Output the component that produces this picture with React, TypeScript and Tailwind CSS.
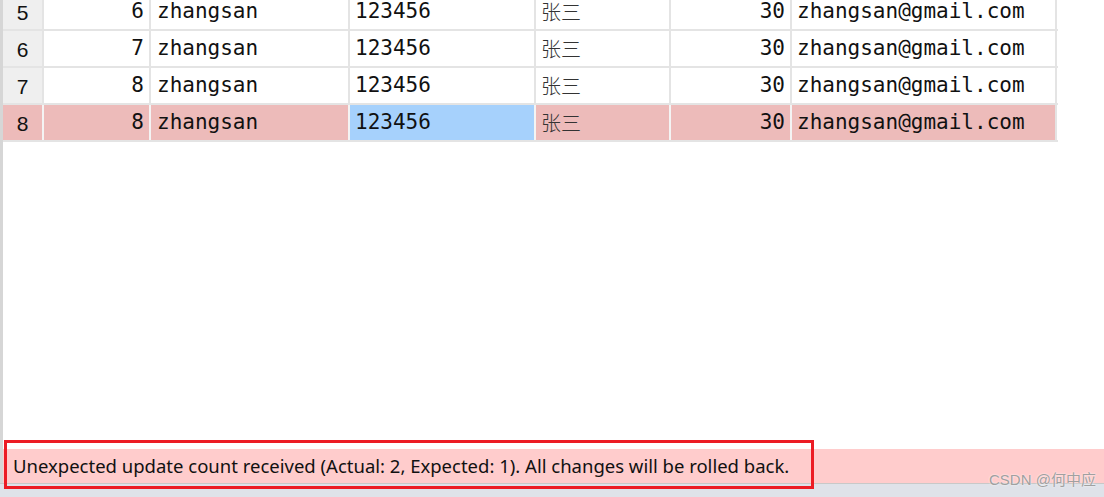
const rows = [
  { no: 5, id: 6 },
  { no: 6, id: 7 },
  { no: 7, id: 8 },
  { no: 8, id: 8, selected: true },
];

const mono = "font-['DejaVu_Sans_Mono',monospace] text-[21px] text-[#111]";

export default function App() {
  return (
    <div className="relative flex h-[497px] w-[1104px] flex-col overflow-hidden bg-white">
      {/* grid area */}
      <div className="flex-1 overflow-hidden border-l-[3px] border-[#d6d6d6]">
        <div className="-mt-[6px] w-[1055px]">
          {rows.map((r) => {
            const line = r.selected ? "border-[#f4f4f4]" : "border-[#e4e4e4]";
            const bg = r.selected ? "bg-[#edbbba]" : "bg-white";
            return (
              <div key={r.no} className="flex h-[37px] border-b-2 border-[#e4e4e4]">
                <div
                  className={`flex w-[41px] items-center justify-center border-r-2 ${line} ${
                    r.selected ? "bg-[#edbbba]" : "bg-[#efefef]"
                  } pt-[2px] font-['Liberation_Sans',sans-serif] text-[21px] text-[#111]`}
                >
                  {r.no}
                </div>
                <div className={`flex w-[107px] items-center justify-end border-r-2 ${line} ${bg} pr-[5px] ${mono}`}>
                  {r.id}
                </div>
                <div className={`flex w-[199px] items-center border-r-2 ${line} ${bg} pl-[6px] ${mono}`}>
                  zhangsan
                </div>
                <div
                  className={`flex w-[186px] items-center border-r-2 ${line} ${
                    r.selected ? "bg-[#a6d1fc]" : "bg-white"
                  } pl-[5px] ${mono}`}
                >
                  123456
                </div>
                <div
                  className={`flex w-[135px] items-center border-r-2 ${line} ${bg} pl-[5px] font-['Noto_Sans_CJK_SC',sans-serif] text-[20px] font-light text-[#333]`}
                >
                  张三
                </div>
                <div className={`flex w-[121px] items-center justify-end border-r-2 ${line} ${bg} pr-[5px] ${mono}`}>
                  30
                </div>
                <div className={`flex w-[265px] items-center border-r-2 border-[#e4e4e4] ${bg} pl-[5px] ${mono}`}>
                  zhangsan@gmail.com
                </div>
              </div>
            );
          })}
        </div>
      </div>

      {/* status message */}
      <div className="flex h-[34px] items-center border-l-[3px] border-[#d6d6d6] bg-[#ffcccc] pl-[10px] font-['Noto_Sans',sans-serif] text-[18.5px] text-[#111]">
        Unexpected update count received (Actual: 2, Expected: 1). All changes will be rolled back.
      </div>
      <div className="h-[14px] border-t border-[#c8c8c8] bg-[#dfe2e9]" />

      {/* annotation */}
      <div className="absolute left-[4px] top-[440px] h-[49px] w-[810px] border-[3px] border-[#ec1c24]" />

      {/* watermark */}
      <div className="absolute left-[989px] top-[469px] font-['Liberation_Sans','Noto_Sans_CJK_SC',sans-serif] text-[15px] text-[#a0a0a0] [text-shadow:0_0_2px_#fff]">
        CSDN @何中应
      </div>
    </div>
  );
}
